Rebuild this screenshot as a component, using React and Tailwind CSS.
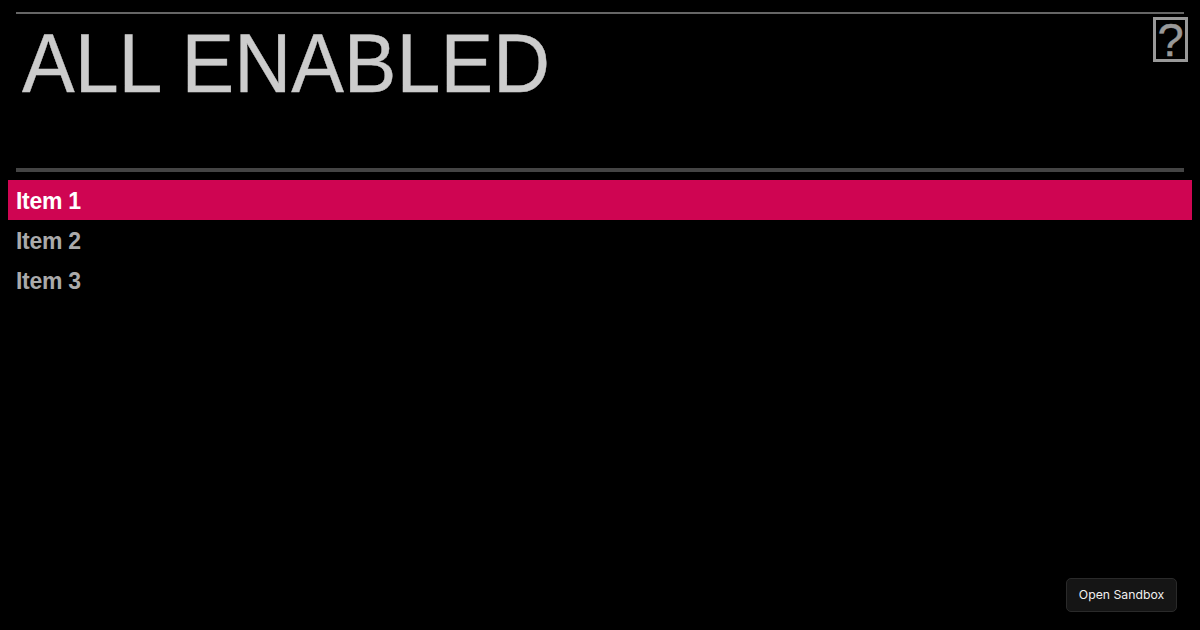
export default function App() {
  const sans = "font-['Liberation_Sans',Arial,sans-serif]";
  return (
    <div className={`relative h-[630px] w-[1200px] overflow-hidden bg-black ${sans}`}>
      <div className="px-2 pt-3">
        <header className="mx-2 flex h-[160px] items-start justify-between border-t-2 border-b-4 border-t-[#666666] border-b-[#444444]">
          <h1 className="ml-[5.5px] mt-[3px] origin-left scale-x-[0.94] text-[84px] leading-[92px] font-normal text-[#cccccc] [-webkit-text-stroke:0.4px_#cccccc]">ALL ENABLED</h1>
          <div className="mt-[3px] -mr-1 flex h-[45px] w-[35px] items-center justify-center border-[3px] border-[#999999] text-[47px] leading-none text-[#999999] [-webkit-text-stroke:0.5px_#999999]">?</div>
        </header>
        <ul className="mt-2 text-[23px] font-bold tracking-[-0.3px]">
          <li className="flex h-10 items-center bg-[#cf0552] px-2 pt-[2px] text-white">Item 1</li>
          <li className="flex h-10 items-center px-2 pt-[2px] text-[#aaaaaa]">Item 2</li>
          <li className="flex h-10 items-center px-2 pt-[2px] text-[#aaaaaa]">Item 3</li>
        </ul>
      </div>
      <button className="absolute right-[23px] bottom-[18px] flex h-[34px] w-[111px] items-center justify-center rounded-[5px] border border-[#2a2a2a] bg-[#151515] font-['Inter',sans-serif] text-[12.25px] text-[#f0f0f0]">Open Sandbox</button>
    </div>
  );
}
